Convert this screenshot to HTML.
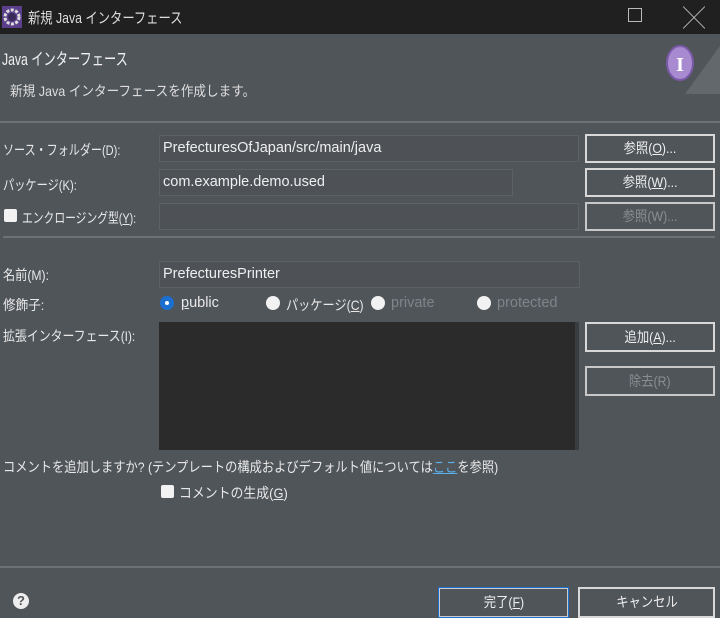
<!DOCTYPE html><html><head><meta charset="utf-8"><style>
body{margin:0;width:720px;height:618px;background:#50555a;font-family:"Liberation Sans","Noto Sans CJK JP",sans-serif;font-size:14px;color:#e8e8e8;position:relative;overflow:hidden}
.a{position:absolute;white-space:nowrap;transform-origin:0 50%}
.tb{left:0;top:0;width:720px;height:34px;background:#202020}
.f{position:absolute;background:#4e5257;border:1px solid #5c6166;box-sizing:border-box;padding:0 3px;line-height:25px;color:#eee;font-size:14.5px}
.b{position:absolute;border:2px solid #d8d8d8;box-sizing:border-box;text-align:center;color:#eee;font-size:14px}
.b span{display:inline-block;transform:scaleX(.88)}
.d{color:#8a8e92;border-color:#c8c8c8}
.hr{position:absolute;left:0;width:720px;height:2px;background:#6d7176}
.rd{position:absolute;width:14px;height:14px;border-radius:50%;background:#f2f2f2}
.cb{position:absolute;width:13px;height:13px;background:#f2f2f2;border-radius:2px}
u{text-decoration:underline}
</style></head><body>
<div class="a tb"></div>
<svg class="a" style="left:2px;top:6px" width="20" height="22" viewBox="0 0 20 22"><rect width="20" height="22" fill="#5b3f8a"/><circle cx="10" cy="11" r="7" fill="none" stroke="#ddd" stroke-width="3" stroke-dasharray="3 1.5"/><circle cx="10" cy="11" r="4" fill="#3a2a5a"/></svg>
<div class="a" style="left:28px;top:7px;font-size:15px;color:#ddd;transform:scaleX(.82)">新規 Java インターフェース</div>
<div class="a" style="left:628px;top:8px;width:12px;height:12px;border:1.5px solid #bbb"></div>
<div class="a" style="left:683px;top:1px;font-size:22px;color:#bbb">╳</div>
<div class="a" style="left:2px;top:45px;font-size:17px;color:#f0f0f0;transform:scaleX(.72)">Java インターフェース</div>
<div class="a" style="left:10px;top:81px;font-size:14px;color:#ddd;transform:scaleX(.9)">新規 Java インターフェースを作成します。</div>
<svg class="a" style="left:655px;top:36px" width="65" height="58"><path d="M30 58 L65 10 L65 58Z" fill="#63686d"/><ellipse cx="25" cy="27" rx="13" ry="17" fill="#a88ad0" stroke="#7a5aa8" stroke-width="2"/><text x="25" y="35" text-anchor="middle" font-size="20" fill="#fff" font-family="Liberation Serif" font-weight="bold">I</text></svg>
<div class="hr" style="top:121px"></div>
<div class="a" style="left:3px;top:140px;transform:scaleX(.79)">ソース・フォルダー(D):</div>
<div class="f" style="left:159px;top:135px;width:420px;height:27px">PrefecturesOfJapan/src/main/java</div>
<div class="b" style="left:585px;top:134px;width:130px;height:29px;line-height:25px"><span>参照(<u>O</u>)...</span></div>
<div class="a" style="left:3px;top:175px;transform:scaleX(.8)">パッケージ(K):</div>
<div class="f" style="left:159px;top:169px;width:354px;height:27px">com.example.demo.used</div>
<div class="b" style="left:585px;top:168px;width:130px;height:29px;line-height:25px"><span>参照(<u>W</u>)...</span></div>
<div class="cb" style="left:4px;top:209px"></div>
<div class="a" style="left:22px;top:208px;transform:scaleX(.77)">エンクロージング型(<u>Y</u>):</div>
<div class="f" style="left:159px;top:203px;width:420px;height:27px"></div>
<div class="b d" style="left:585px;top:202px;width:130px;height:29px;line-height:25px"><span>参照(W)...</span></div>
<div class="hr" style="top:236px;left:3px;width:712px"></div>
<div class="a" style="left:3px;top:265px;transform:scaleX(.87)">名前(M):</div>
<div class="f" style="left:159px;top:261px;width:421px;height:27px">PrefecturesPrinter</div>
<div class="a" style="left:3px;top:295px;transform:scaleX(.9)">修飾子:</div>
<div class="rd" style="left:160px;top:296px;background:#1a6fd0;width:10px;height:10px;border:2px solid #1a6fd0"><div style="position:absolute;left:3px;top:3px;width:4px;height:4px;border-radius:50%;background:#fff"></div></div>
<div class="a" style="left:181px;top:295px;font-size:14.5px"><u>p</u>ublic</div>
<div class="rd" style="left:266px;top:296px"></div>
<div class="a" style="left:286px;top:295px;transform:scaleX(.87)">パッケージ(<u>C</u>)</div>
<div class="rd" style="left:371px;top:296px"></div>
<div class="a" style="left:391px;top:295px;color:#80858a;font-size:14.5px">private</div>
<div class="rd" style="left:477px;top:296px"></div>
<div class="a" style="left:497px;top:295px;color:#80858a;font-size:14.5px">protected</div>
<div class="a" style="left:3px;top:326px;transform:scaleX(.85)">拡張インターフェース(I):</div>
<div class="a" style="left:159px;top:322px;width:420px;height:128px;background:#2b2b2b;border-right:4px solid #3a3d40;box-sizing:border-box"></div>
<div class="b" style="left:585px;top:322px;width:130px;height:30px;line-height:26px"><span>追加(<u>A</u>)...</span></div>
<div class="b d" style="left:585px;top:366px;width:130px;height:30px;line-height:26px"><span>除去(R)</span></div>
<div class="a" style="left:3px;top:457px;transform:scaleX(.875)">コメントを追加しますか? (テンプレートの構成およびデフォルト値については<u style="color:#5ab0e8">ここ</u>を参照)</div>
<div class="cb" style="left:161px;top:485px"></div>
<div class="a" style="left:179px;top:483px;transform:scaleX(.92)">コメントの生成(<u>G</u>)</div>
<div class="hr" style="top:566px"></div>
<div class="a" style="left:13px;top:593px;width:16px;height:16px;border-radius:50%;background:#eee;color:#50555a;font-weight:bold;font-size:13px;text-align:center;line-height:16px">?</div>
<div class="b" style="left:438px;top:587px;width:131px;height:31px;line-height:29px;border:1px solid #1a6fd0;box-shadow:inset 0 0 0 1px #ccc"><span>完了(<u>F</u>)</span></div>
<div class="b" style="left:578px;top:587px;width:137px;height:31px;line-height:27px"><span>キャンセル</span></div>
</body></html>
